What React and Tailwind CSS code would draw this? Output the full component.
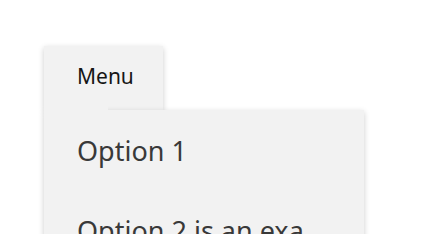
export default function App() {
  return (
    <div className="w-[430px] h-[234px] overflow-hidden bg-white" style={{ fontFamily: '"Noto Sans", "Open Sans", sans-serif' }}>
      <div className="relative ml-[44px] mt-[46px] w-[120px]">
        {/* trigger */}
        <button className="flex h-[64px] w-[119px] items-center pl-[33px] pb-[2px] bg-[#f2f2f2] text-[21px] text-[#161616] shadow-[0_2px_6px_rgba(0,0,0,0.2)]">
          Menu
        </button>

        {/* dropdown */}
        <div className="absolute left-0 top-[64px] z-10 w-[320px] bg-[#f2f2f2] shadow-[0_2px_6px_rgba(0,0,0,0.2)]">
          <div className="absolute -top-[6px] left-0 h-[8px] w-[64px] bg-[#f2f2f2]" />
          <ul className="text-[27px] text-[#393939]">
            <li className="flex h-[82px] items-center px-[33px]">Option 1</li>
            <li className="h-[82px] pl-[33px] pr-[28px] pt-[19px] truncate">Option 2 is an example of a really long string</li>
          </ul>
        </div>
      </div>
    </div>
  );
}
